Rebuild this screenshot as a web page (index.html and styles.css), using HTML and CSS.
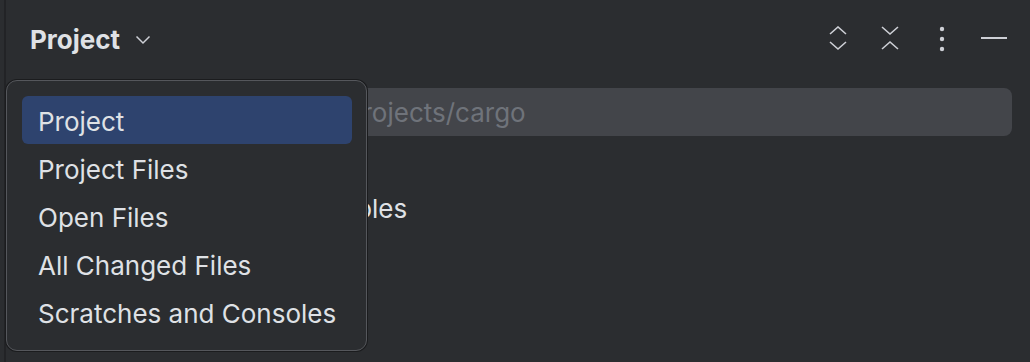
FILE: index.html
```html
<!DOCTYPE html>
<html>
<head>
<meta charset="utf-8">
<link rel="stylesheet" href="styles.css">
</head>
<body>
<div class="window">
  <div class="panel">
    <div class="header">
      <div class="title">Project
        <svg class="chev" width="16" height="10" viewBox="0 0 16 10"><path d="M1.5 1.5 L8 8 L14.5 1.5" fill="none" stroke="#ced0d6" stroke-width="1.5"/></svg>
      </div>
      <div class="tools">
        <svg class="t-expand" width="18" height="26" viewBox="0 0 18 26"><path d="M1 8 L9 1 L17 8 M1 16 L9 23 L17 16" fill="none" stroke="#ced0d6" stroke-width="1.6"/></svg>
        <svg class="t-collapse" width="18" height="26" viewBox="0 0 18 26"><path d="M1 1 L9 8 L17 1 M1 23 L9 16 L17 23" fill="none" stroke="#ced0d6" stroke-width="1.6"/></svg>
        <svg class="t-more" width="6" height="26" viewBox="0 0 6 26"><circle cx="3" cy="3" r="2.2" fill="#ced0d6"/><circle cx="3" cy="13" r="2.2" fill="#ced0d6"/><circle cx="3" cy="23" r="2.2" fill="#ced0d6"/></svg>
        <svg class="t-min" width="26" height="26" viewBox="0 0 26 26"><path d="M0 12 H26" stroke="#ced0d6" stroke-width="2"/></svg>
      </div>
    </div>
    <div class="search">~/projects/cargo</div>
    <div class="tree">
      <div class="row">External Libraries</div>
      <div class="row">Scratches and Consoles</div>
    </div>
  </div>
  <div class="popup">
    <div class="item selected">Project</div>
    <div class="item">Project Files</div>
    <div class="item">Open Files</div>
    <div class="item">All Changed Files</div>
    <div class="item">Scratches and Consoles</div>
  </div>
</div>
</body>
</html>
```
FILE: styles.css
```css
html, body {
  margin: 0;
  padding: 0;
  background: #2b2d30;
  font-family: Inter, "Noto Sans", sans-serif;
  color: #dfe1e5;
}
.window {
  position: relative;
  width: 1030px;
  height: 362px;
  overflow: hidden;
  padding-left: 4px;
  box-sizing: border-box;
}
.panel {
  height: 362px;
  border-left: 2px solid #222326;
  box-sizing: border-box;
}
.header {
  height: 78px;
  display: flex;
  align-items: center;
  justify-content: space-between;
  padding: 0 23px 0 24px;
}
.title {
  font-size: 26px;
  font-weight: 700;
  display: flex;
  align-items: center;
  gap: 15px;
}
.chev { margin-top: 1px; }
.tools {
  display: flex;
  align-items: center;
}
.tools svg { display: block; }
.t-collapse { margin-left: 34px; }
.t-more { margin-left: 40px; }
.t-min { margin-left: 36px; }
.search {
  margin: 10px 18px 0 14px;
  height: 48px;
  background: #43454a;
  border-radius: 8px;
  font-size: 26px;
  line-height: 50px;
  color: #6f737a;
  padding-left: 300px;
  overflow: hidden;
}
.tree {
  padding-top: 1px;
}
.row {
  height: 48px;
  line-height: 48px;
  font-size: 26px;
  padding-left: 103px;
}
.popup {
  position: absolute;
  left: 6px;
  top: 80px;
  width: 361px;
  height: 271px;
  box-sizing: border-box;
  background: #2b2d30;
  border: 1px solid #55575c;
  border-radius: 11px;
  box-shadow: 0 0 0 1px #1b1c1e;
  padding: 15px 14px 15px 15px;
}
.item {
  height: 48px;
  line-height: 51px;
  font-size: 26px;
  padding-left: 16px;
  border-radius: 6px;
  overflow: hidden;
}
.item.selected {
  background: #2e436e;
}
```
